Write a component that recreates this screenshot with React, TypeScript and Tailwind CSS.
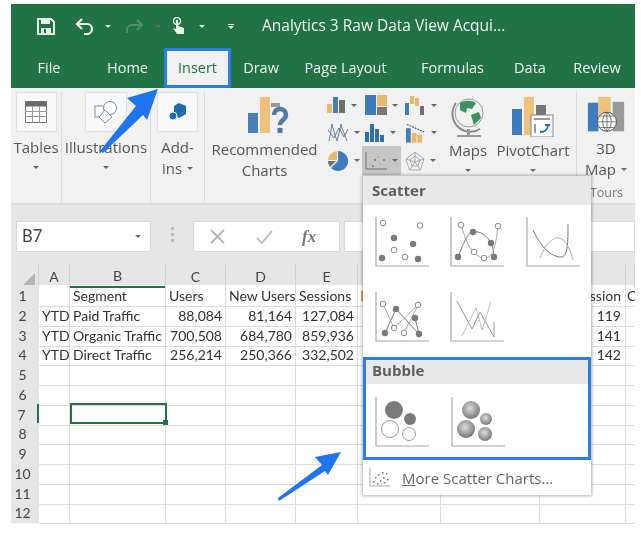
import React from "react";

const gridCols = "grid grid-cols-[28px_31px_96px_60px_70px_62px_83px_99px_86px_9px]";

function Caret({ className = "" }: { className?: string }) {
  return (
    <span
      className={`inline-block h-0 w-0 border-x-[3px] border-t-[3px] border-x-transparent border-t-[#666] ${className}`}
    />
  );
}

function Tab({ label, className = "" }: { label: string; className?: string }) {
  return (
    <div className={`flex items-center justify-center text-[14.500px] text-[#f0f5f2] ${className}`}>
      {label}
    </div>
  );
}

function Axis() {
  return <path d="M1 0V49H54" fill="none" stroke="#a8a8a8" strokeWidth="1.2" />;
}

function Dots({ filled, hollow }: { filled: number[][]; hollow: number[][] }) {
  return (
    <>
      {filled.map(([x, y]) => (
        <circle key={`f${x}${y}`} cx={x} cy={y} r="3.2" fill="#7a7a7a" />
      ))}
      {hollow.map(([x, y]) => (
        <circle key={`h${x}${y}`} cx={x} cy={y} r="2.8" fill="#fff" stroke="#8a8a8a" strokeWidth="1" />
      ))}
    </>
  );
}

function ChartIcon({ children }: { children?: React.ReactNode }) {
  return (
    <svg width="55" height="50" viewBox="0 0 55 50">
      <Axis />
      {children}
    </svg>
  );
}

function MiniBars() {
  return (
    <svg width="19" height="18" viewBox="0 0 19 18">
      <rect x="0" y="8" width="5" height="9" fill="#e8b96b" />
      <rect x="6" y="1" width="5" height="16" fill="#4a7db5" />
      <rect x="12" y="4" width="6" height="13" fill="#6e6e6e" />
    </svg>
  );
}

function MiniTreemap() {
  return (
    <svg width="22" height="20" viewBox="0 0 22 20">
      <rect x="0" y="0" width="11" height="20" fill="#3f7cbd" />
      <rect x="12" y="0" width="10" height="11" fill="#e9b86a" />
      <rect x="12" y="12" width="10" height="8" fill="#777" />
    </svg>
  );
}

function MiniStep() {
  return (
    <svg width="21" height="20" viewBox="0 0 21 20">
      <rect x="0" y="8" width="4" height="12" fill="#3f7cbd" />
      <rect x="5" y="1" width="4" height="8" fill="#e9b86a" />
      <rect x="10" y="3" width="4" height="8" fill="#e9b86a" />
      <rect x="15" y="11" width="4" height="9" fill="#6e6e6e" />
    </svg>
  );
}

function MiniStock() {
  return (
    <svg width="22" height="20" viewBox="0 0 22 20" fill="none" strokeWidth="1">
      <path d="M2 18 5 2l5 16 4-16 6 16" stroke="#5a86b5" />
      <path d="M1 7l6 8 5-10 5 9 4-8" stroke="#777" />
      <circle cx="5" cy="2" r="1" fill="#5a86b5" />
      <circle cx="14" cy="2" r="1" fill="#5a86b5" />
    </svg>
  );
}

function MiniHist() {
  return (
    <svg width="20" height="19" viewBox="0 0 20 19">
      <rect x="0" y="9" width="4" height="10" fill="#2f6fae" />
      <rect x="5" y="1" width="4" height="18" fill="#2f6fae" />
      <rect x="10" y="6" width="4" height="13" fill="#2f6fae" />
      <rect x="15" y="12" width="4" height="7" fill="#2f6fae" />
    </svg>
  );
}

function MiniPareto() {
  return (
    <svg width="22" height="20" viewBox="0 0 22 20">
      <rect x="1" y="5" width="5" height="15" fill="#3f7cbd" />
      <rect x="7" y="10" width="5" height="10" fill="#e9b86a" />
      <rect x="13" y="12" width="5" height="8" fill="#e9b86a" />
      <path d="M2 1 20 9" stroke="#555" strokeWidth="1.2" strokeDasharray="2 1" />
    </svg>
  );
}

function MiniPie() {
  return (
    <svg width="22" height="22" viewBox="0 0 22 22">
      <path d="M11 1a10 10 0 1 1-7 17l7-7z" fill="#3f7cbd" />
      <path d="M10 1v9H1a10 10 0 0 1 9-9z" fill="#e9b86a" />
      <path d="M1 11h8l-6 6a10 10 0 0 1-2-6z" fill="#6e6e6e" />
    </svg>
  );
}

function MiniScatter() {
  return (
    <svg width="22" height="20" viewBox="0 0 22 20">
      <path d="M1 1V18H22" fill="none" stroke="#707070" strokeWidth="1" />
      <circle cx="5" cy="14" r="1" fill="#e0a93f" />
      <circle cx="10" cy="9" r="1" fill="#3f7cbd" />
      <circle cx="13" cy="6" r="1" fill="#e0a93f" />
      <circle cx="15" cy="13" r="1" fill="#e0a93f" />
      <circle cx="19" cy="9" r="1" fill="#3f7cbd" />
      <circle cx="8" cy="15" r="1" fill="#3f7cbd" />
    </svg>
  );
}

function MiniRadar() {
  return (
    <svg width="20" height="20" viewBox="0 0 20 20" fill="none" stroke="#9a9a9a" strokeWidth="0.8">
      <path d="M10 1 19 8 15.5 19H4.500L1 8z" />
      <path d="M10 5 15 9 13 15H7L5 9z" />
      <path d="M10 1V11M19 8 10 11M15.500 19 10 11M4.500 19 10 11M1 8l9 3" />
    </svg>
  );
}

function BigLabel({
  lines,
  caret,
  className = "",
}: {
  lines: React.ReactNode[];
  caret?: boolean;
  className?: string;
}) {
  return (
    <div className={`flex flex-col items-center text-[15px] leading-[21px] text-[#555] ${className}`}>
      {lines.map((l, i) => (
        <div key={i} className="whitespace-nowrap">
          {l}
        </div>
      ))}
      {caret && (
        <div className="flex h-[18px] items-center">
          <Caret />
        </div>
      )}
    </div>
  );
}

function Popover() {
  return (
    <div className="absolute left-[363px] top-[176px] w-[228px] bg-white shadow-[0_0_3px_1px_rgba(0,0,0,0.3)]">
      <div className="flex h-[29px] items-center bg-[#e9e9e9] px-[9px] text-[15px] font-bold text-[#5e5e5e]">
        Scatter
      </div>
      <div className="grid grid-cols-[75px_76px_55px] gap-y-[25px] pb-[15px] pl-[12px] pt-[12px]">
        <ChartIcon>
          <Dots
            filled={[[7, 41], [19, 21], [38, 27], [43, 42]]}
            hollow={[[8, 6], [45, 8.500], [19, 33], [30, 40]]}
          />
        </ChartIcon>
        <ChartIcon>
          <g fill="none" strokeWidth="1">
            <path d="M8 40C14 25 18 15 23 15C34 13 44 25 44 40" stroke="#777" />
            <path d="M11 8C15 20 18 30 24 35C28 40 32 41 34 41C44 42 46 25 48 9" stroke="#aaa" />
          </g>
          <Dots
            filled={[[8, 40], [23, 15], [41, 26], [44, 40]]}
            hollow={[[11, 8], [48, 9], [24, 35], [34, 41]]}
          />
        </ChartIcon>
        <ChartIcon>
          <g fill="none" strokeWidth="1">
            <path d="M7 13C15 30 25 40 35 40C42 40 42 25 42 7" stroke="#777" />
            <path d="M14 41C20 25 28 20 33 21C40 22 45 35 47 43" stroke="#aaa" />
          </g>
        </ChartIcon>
        <ChartIcon>
          <g fill="none" strokeWidth="1">
            <path d="M10 41 21 17 44 42 40 26" stroke="#777" />
            <path d="M8 12 19 36 43 13 29 41" stroke="#aaa" />
          </g>
          <Dots
            filled={[[10, 41], [21, 17], [40, 26], [44, 42]]}
            hollow={[[8, 12], [43, 13], [19, 36], [29, 41]]}
          />
        </ChartIcon>
        <ChartIcon>
          <g fill="none" strokeWidth="1">
            <path d="M7 9 22 37 30 20 44 45V30" stroke="#999" />
            <path d="M12 44 26 16 32 38 41 10" stroke="#bbb" />
          </g>
        </ChartIcon>
      </div>
      <div className="border-[3px] border-[#2b7de9]">
        <div className="flex h-[24px] items-center bg-[#e9e9e9] px-[6px] pb-[3px] text-[15px] font-bold text-[#5e5e5e]">
          Bubble
        </div>
        <div className="flex gap-[21px] pb-[10px] pl-[9px] pt-[13px]">
          <ChartIcon>
            <circle cx="19" cy="13" r="9" fill="#7a7a7a" />
            <circle cx="35" cy="22" r="6" fill="#7a7a7a" />
            <circle cx="15" cy="32" r="8.500" fill="#fff" stroke="#999" />
            <circle cx="34" cy="37" r="6.500" fill="#fff" stroke="#999" />
          </ChartIcon>
          <ChartIcon>
            <defs>
              <radialGradient id="ball" cx="0.45" cy="0.4" r="0.6">
                <stop offset="0" stopColor="#dedede" />
                <stop offset="1" stopColor="#777" />
              </radialGradient>
            </defs>
            <circle cx="20" cy="13" r="9" fill="url(#ball)" />
            <circle cx="35" cy="22" r="6" fill="url(#ball)" />
            <circle cx="15" cy="32" r="9" fill="url(#ball)" />
            <circle cx="34" cy="37" r="7" fill="url(#ball)" />
          </ChartIcon>
        </div>
      </div>
      <div className="flex h-[35px] items-center pl-[6px]">
        <svg width="21" height="20" viewBox="0 0 21 20">
          <path d="M1 0V18H21" fill="none" stroke="#aaa" strokeWidth="1" />
          {[[4, 13], [6, 9], [9, 6], [11, 12], [13, 4], [14, 9], [17, 5], [18, 11], [8, 15], [15, 14]].map(
            ([x, y]) => (
              <rect key={`${x}-${y}`} x={x} y={y} width="1.500" height="1.500" fill="#777" />
            )
          )}
        </svg>
        <span className="ml-[12px] mt-[1px] whitespace-nowrap text-[15px] text-[#666]">
          <span className="underline">M</span>ore Scatter Charts...
        </span>
      </div>
    </div>
  );
}

const rows: Record<number, string[]> = {
  1: ["", "Segment", "Users", "New Users", "Sessions"],
  2: ["YTD", "Paid Traffic", "88,084", "81,164", "127,084"],
  3: ["YTD", "Organic Traffic", "700,508", "684,780", "859,936"],
  4: ["YTD", "Direct Traffic", "256,214", "250,366", "332,502"],
};
const last: Record<number, string> = { 1: "Session", 2: "119", 3: "141", 4: "142" };

function Sheet() {
  const nums = Array.from({ length: 12 }, (_, i) => i + 1);
  return (
    <div className="font-['Lato',sans-serif] text-[14px] text-[#333]">
      <div className={`${gridCols} h-[20px] bg-[#e6e6e6] text-[#444]`}>
        <div className="flex items-end justify-end border-r border-[#d0d0d0] p-[3px]">
          <div className="h-0 w-0 border-b-[12px] border-l-[12px] border-b-[#b5b5b5] border-l-transparent" />
        </div>
        {["A", "B", "C", "D", "E", "F", "G", "H", ""].map((c) => (
          <div
            key={c}
            className={`flex items-center justify-center border-r border-[#d0d0d0] ${
              c === "B" ? "border-b-2 border-b-[#217346]" : ""
            }`}
          >
            {c}
          </div>
        ))}
      </div>
      {nums.map((n) => {
        const r = rows[n] ?? ["", "", "", "", ""];
        return (
          <div key={n} className={`${gridCols} h-[19.750px] leading-[21px]`}>
            <div
              className={`border-b border-[#f5f5f5] bg-[#e6e6e6] pr-[5px] text-center text-[#444] ${
                n === 7 ? "border-r-2 border-r-[#217346]" : ""
              }`}
            >
              {n}
            </div>
            {r.map((v, i) => (
              <div
                key={i}
                className={`whitespace-nowrap border-b border-r border-[#dcdcdc] px-[3px] ${
                  i >= 2 && n > 1 ? "text-right" : ""
                }`}
              >
                {v}
              </div>
            ))}
            <div className="overflow-hidden border-b border-r border-[#dcdcdc] px-[2px] text-[#d98a2b]">
              {n === 1 ? "B" : ""}
            </div>
            <div className="border-b border-r border-[#dcdcdc]" />
            <div className="whitespace-nowrap border-b border-r border-[#dcdcdc] pr-[4px] text-right">
              {last[n] ?? ""}
            </div>
            <div className="overflow-hidden border-b border-[#dcdcdc] pl-[1px]">{n === 1 ? "C" : ""}</div>
          </div>
        );
      })}
    </div>
  );
}

export default function App() {
  return (
    <div className="relative h-[536px] w-[641px] overflow-hidden bg-white font-['Open_Sans',sans-serif] blur-[0.4px]">
      <div className="ml-[11px] mt-[4px] w-[624px]">
        {/* title bar */}
        <div className="flex h-[44px] items-center bg-[#217346] text-white">
          <svg className="ml-[26px]" width="18" height="17" viewBox="0 0 18 17">
            <path d="M1 1H14L17 4V16H1z" fill="none" stroke="#e8efe9" strokeWidth="2" />
            <rect x="4" y="2" width="9" height="4" fill="#e8efe9" />
            <rect x="4" y="10" width="10" height="6" fill="#e8efe9" />
            <rect x="7" y="11" width="2" height="4" fill="#217346" />
          </svg>
          <svg className="ml-[20px]" width="20" height="17" viewBox="0 0 20 17" fill="none">
            <path d="M7 1 2 6l5 5M2 6h10a5 5 0 0 1 0 10H9" stroke="#eef4f0" strokeWidth="2.200" />
          </svg>
          <Caret className="ml-[10px] border-t-[#dfe9e2]" />
          <svg className="ml-[14px]" width="18" height="15" viewBox="0 0 18 15" fill="none">
            <path d="M12 1l5 5-5 5M17 6H7a5 5 0 0 0-5 5v3" stroke="#4f8f6c" strokeWidth="2" />
          </svg>
          <Caret className="ml-[12px] border-t-[#4f8f6c]" />
          <svg className="ml-[10px]" width="15" height="18" viewBox="0 0 15 18">
            <circle cx="6" cy="4" r="3.500" fill="none" stroke="#eef4f0" strokeWidth="1.500" />
            <path d="M5 3h2v6l6 2v6H6L2 11l3 1z" fill="#eef4f0" />
          </svg>
          <Caret className="ml-[13px] border-t-[#eef4f0]" />
          <div className="ml-[23px] flex flex-col items-center gap-[1px]">
            <div className="h-[1px] w-[6px] bg-[#eef4f0]" />
            <Caret className="border-t-[#eef4f0]" />
          </div>
          <div className="ml-[28px] whitespace-nowrap text-[15.500px] text-[#f2f6f3]">
            Analytics 3 Raw Data View Acqui...
          </div>
        </div>

        {/* tabs */}
        <div className="flex h-[40px] items-stretch bg-[#217346]">
          <Tab label="File" className="w-[76px]" />
          <Tab label="Home" className="w-[77px] pl-[4px]" />
          <div className="flex w-[67px] items-center justify-center rounded-[2px] border-[3px] border-[#2b7de9] bg-[#f1f1f1] text-[14.500px] text-[#217346]">
            Insert
          </div>
          <Tab label="Draw" className="w-[60px]" />
          <Tab label="Page Layout" className="w-[109px]" />
          <Tab label="Formulas" className="w-[105px]" />
          <Tab label="Data" className="w-[50px]" />
          <Tab label="Review" className="w-[80px] pl-[4px]" />
        </div>

        {/* ribbon */}
        <div className="relative flex h-[117px] border-b-2 border-[#dcdcdc] bg-[#f1f1f1] pt-[4px]">
          <div className="flex w-[51px] flex-col items-center border-r border-[#dadada]">
            <div className="flex h-[40px] w-[41px] items-center justify-center border border-[#dedede] bg-[#f8f8f8]">
              <svg width="22" height="22" viewBox="0 0 22 22">
                <rect x="0.500" y="0.500" width="21" height="21" fill="#fff" stroke="#777" />
                <rect x="0.500" y="0.500" width="21" height="5" fill="#6a6a6a" />
                <path d="M7.500 5V22M14.500 5V22M0 10.500H22M0 15.500H22" stroke="#999" />
              </svg>
            </div>
            <BigLabel lines={["Tables"]} caret className="mt-[5px]" />
          </div>
          <div className="flex w-[89px] flex-col items-center border-r border-[#dadada]">
            <div className="flex h-[40px] w-[42px] items-center justify-center border border-[#dedede] bg-[#f8f8f8]">
              <svg width="24" height="24" viewBox="0 0 24 24" fill="#fff" stroke="#6d8fb5" strokeWidth="1">
                <rect x="1" y="6" width="12" height="11" />
                <circle cx="16" cy="8" r="6.500" />
                <path d="M11 10l7 7-7 6-6-6z" />
              </svg>
            </div>
            <BigLabel lines={["Illustrations"]} caret className="mt-[5px]" />
          </div>
          <div className="flex w-[54px] flex-col items-center border-r border-[#dadada]">
            <div className="flex h-[40px] w-[41px] items-center justify-center border border-[#dedede] bg-[#f8f8f8]">
              <svg width="20" height="20" viewBox="0 0 20 20">
                <path d="M11 1l7 3v8l-7 4-5-3V4z" fill="#1e6bb0" />
                <circle cx="5" cy="14" r="4" fill="#1e6bb0" stroke="#f8f8f8" />
              </svg>
            </div>
            <BigLabel
              className="mt-[5px]"
              lines={[
                "Add-",
                <span key="i" className="flex items-center gap-[5px]">
                  ins <Caret />
                </span>,
              ]}
            />
          </div>
          <div className="flex w-[117px] flex-col items-center">
            <svg className="ml-[10px] mt-[5px]" width="42" height="40" viewBox="0 0 42 40">
              <rect x="0" y="16" width="10" height="20" fill="#4a80b8" />
              <rect x="12" y="0" width="10" height="36" fill="#eec27b" />
              <rect x="23" y="6" width="9" height="4" fill="#999" />
              <path d="M26 18c0-8 12-8 12 0 0 5-6 5-6 10" fill="none" stroke="#4f7aa5" strokeWidth="4.500" />
              <rect x="29.500" y="31" width="5" height="5" fill="#4f7aa5" />
            </svg>
            <BigLabel lines={["Recommended", "Charts"]} className="ml-[2px] mt-[2px]" />
          </div>
          <div className="-mt-[1px] grid h-[84px] w-[115px] grid-cols-[38px_40px_32px] grid-rows-[28px_27px_29px] pl-[5px]">
            {[
              <MiniBars key="a" />,
              <MiniTreemap key="b" />,
              <MiniStep key="c" />,
              <MiniStock key="d" />,
              <MiniHist key="e" />,
              <MiniPareto key="f" />,
              <MiniPie key="g" />,
              <MiniScatter key="h" />,
              <MiniRadar key="i" />,
            ].map((icon, i) => (
              <div
                key={i}
                className={`flex items-center gap-[5px] ${
                  i === 7 ? "-ml-[3px] w-[39px] bg-[#c6c6c6] pl-[3px]" : ""
                }`}
              >
                {icon}
                <Caret />
              </div>
            ))}
          </div>
          <div className="flex w-[62px] flex-col items-center">
            <svg className="mt-[3px]" width="34" height="44" viewBox="0 0 34 44">
              <circle cx="18" cy="18" r="14" fill="#eef3ee" stroke="#9a9a9a" />
              <path d="M9 8c5-3 12-3 16 0l-4 6-5-1-1 5-6-3zM20 20l8-3 2 6-7 7z" fill="#3f8f66" />
              <path d="M5 8a18 18 0 0 0 24 26" fill="none" stroke="#8a8a8a" strokeWidth="2" />
              <rect x="6" y="40" width="24" height="2" fill="#999" />
              <rect x="16" y="34" width="3" height="6" fill="#999" />
            </svg>
            <BigLabel lines={["Maps"]} caret className="mt-[1px]" />
          </div>
          <div className="flex w-[78px] flex-col items-center border-r border-[#dadada] pr-[9px]">
            <svg className="mt-[5px]" width="42" height="40" viewBox="0 0 42 40">
              <rect x="0" y="12" width="10" height="26" fill="#3f7cbd" />
              <rect x="12" y="0" width="10" height="38" fill="#eec27b" />
              <rect x="24" y="8" width="10" height="12" fill="#777" />
              <rect x="19" y="18" width="22" height="22" fill="#fff" stroke="#888" />
              <path d="M22 22H38M23 27V36" stroke="#999" strokeWidth="2" />
              <path d="M28 35c5 0 8-3 8-7M33 28h5" fill="none" stroke="#1e6bb0" strokeWidth="1.800" />
            </svg>
            <BigLabel lines={["PivotChart"]} caret className="mt-[3px]" />
          </div>
          <div className="flex w-[58px] flex-col items-center">
            <svg className="mt-[5px]" width="38" height="38" viewBox="0 0 38 38">
              <rect x="0" y="6" width="11" height="30" fill="#3f7cbd" />
              <rect x="11" y="0" width="13" height="30" fill="#eec27b" />
              <rect x="26" y="5" width="12" height="31" fill="#999" />
              <circle cx="20" cy="26" r="10" fill="#fff" stroke="#555" />
              <path d="M10 26H30M20 16V36M13 20H27M13 32H27M20 16c-6 5-6 15 0 20M20 16c6 5 6 15 0 20" fill="none" stroke="#555" strokeWidth="0.800" />
            </svg>
            <BigLabel
              className="mt-[5px]"
              lines={[
                "3D",
                <span key="m" className="flex items-center gap-[5px]">
                  Map <Caret />
                </span>,
              ]}
            />
            <div className="ml-[1px] mt-[4px] text-[12.500px] text-[#777]">Tours</div>
          </div>
        </div>

        {/* formula bar */}
        <div className="flex h-[60px] items-start bg-[#e6e6e6] pt-[16px]">
          <div className="ml-[5px] flex h-[31px] w-[135px] items-center justify-between border border-[#d8d8d8] bg-white pl-[5px] pr-[9px] font-['Lato',sans-serif] text-[16.500px] text-[#444]">
            B7
            <Caret />
          </div>
          <div className="ml-[20px] mt-[6px] flex w-[2px] flex-col gap-[3px]">
            <div className="h-[3px] w-[3px] bg-[#bbb]" />
            <div className="h-[3px] w-[3px] bg-[#bbb]" />
            <div className="h-[3px] w-[3px] bg-[#bbb]" />
          </div>
          <div className="ml-[20px] flex h-[31px] w-[147px] items-center border border-[#d8d8d8] bg-white">
            <svg className="ml-[16px]" width="15" height="15" viewBox="0 0 15 15">
              <path d="M1 1 14 14M14 1 1 14" stroke="#b5b5b5" strokeWidth="1.800" />
            </svg>
            <svg className="ml-[31px]" width="17" height="14" viewBox="0 0 17 14" fill="none">
              <path d="M1 8 6 13 16 1" stroke="#c2c2c2" strokeWidth="2" />
            </svg>
            <span className="ml-[29px] font-['Liberation_Serif',serif] text-[17px] font-bold italic text-[#777]">
              fx
            </span>
          </div>
          <div className="ml-[4px] h-[31px] flex-1 border border-[#d8d8d8] bg-white" />
        </div>

        <Sheet />
      </div>

      {/* selected cell */}
      <div className="absolute left-[70px] top-[403px] h-[21px] w-[97px] border-2 border-[#217346]">
        <div className="absolute -bottom-[3px] -right-[3px] h-[5px] w-[5px] bg-[#217346]" />
      </div>

      <Popover />

      {/* annotation arrows */}
      <svg className="absolute left-0 top-0" width="641" height="536" viewBox="0 0 641 536">
        <polygon points="158,89 127,98 136,106 100,151 103,153 143,115 147,120" fill="#1f75f0" />
        <polygon points="341,452 315,457 322,465 278,498 279,501 325,471 328,475" fill="#1f75f0" />
      </svg>
    </div>
  );
}
